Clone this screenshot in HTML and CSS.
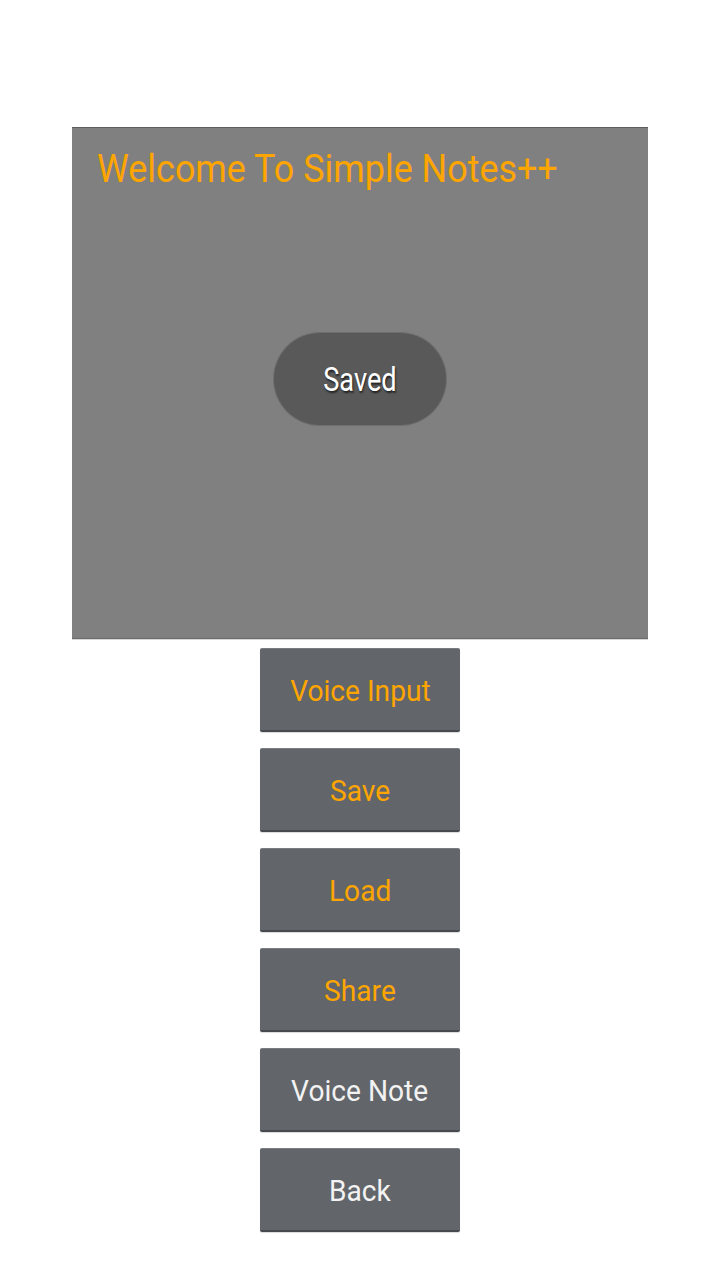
FILE: index.html
```html
<!DOCTYPE html>
<html>
<head>
<meta charset="utf-8">
<link rel="stylesheet" href="styles.css">
</head>
<body>
<div class="screen">
  <div class="note">
    <div class="title">Welcome To Simple Notes++</div>
    <div class="toast"><span>Saved</span></div>
  </div>
  <div class="buttons">
    <div class="btn orange"><span>Voice Input</span></div>
    <div class="btn orange"><span>Save</span></div>
    <div class="btn orange"><span>Load</span></div>
    <div class="btn orange"><span>Share</span></div>
    <div class="btn white"><span>Voice Note</span></div>
    <div class="btn white"><span>Back</span></div>
  </div>
</div>
</body>
</html>
```
FILE: styles.css
```css
html, body {
  margin: 0;
  padding: 0;
  background: #ffffff;
}
.screen {
  width: 720px;
  height: 1280px;
  display: flex;
  flex-direction: column;
  align-items: center;
  padding-top: 127px;
  box-sizing: border-box;
  font-family: Roboto, "Noto Sans", sans-serif;
}
.note {
  position: relative;
  width: 576px;
  height: 512px;
  background: #808080;
  border-top: 1px solid #5e5e5e;
  border-bottom: 1px solid #6a6a6a;
  box-sizing: border-box;
  box-shadow: 0 1px 0 #d8d8d8;
  padding: 18px 0 0 25px;
}
.title {
  color: #ffa500;
  font-size: 38px;
  line-height: 46px;
  transform: scaleX(0.945);
  transform-origin: left center;
  white-space: nowrap;
}
.toast {
  position: absolute;
  left: 202px;
  top: 205px;
  width: 172px;
  height: 92px;
  border-radius: 46px;
  background: #595959;
  box-shadow: 0 0 0 1px #6e6e6e;
  display: flex;
  align-items: center;
  justify-content: center;
}
.toast span {
  color: #ffffff;
  font-size: 34px;
  font-weight: 400;
  display: inline-block;
  transform: scaleX(0.8);
  text-shadow: 1px 2px 2px #222222;
}
.buttons {
  margin-top: 9px;
  display: flex;
  flex-direction: column;
  gap: 16px;
}
.btn {
  width: 200px;
  height: 84px;
  box-sizing: border-box;
  background: #62666a;
  border-radius: 2px;
  border-top: 1px solid #7a7d80;
  border-bottom: 2px solid #474a4d;
  box-shadow: 0 1px 1px rgba(0,0,0,0.15);
  display: flex;
  align-items: center;
  justify-content: center;
  font-size: 29px;
}
.btn span {
  display: inline-block;
  transform: scaleX(0.97);
  padding-top: 2px;
}
.orange { color: #ffa500; }
.white { color: #f2f2f2; }
```
